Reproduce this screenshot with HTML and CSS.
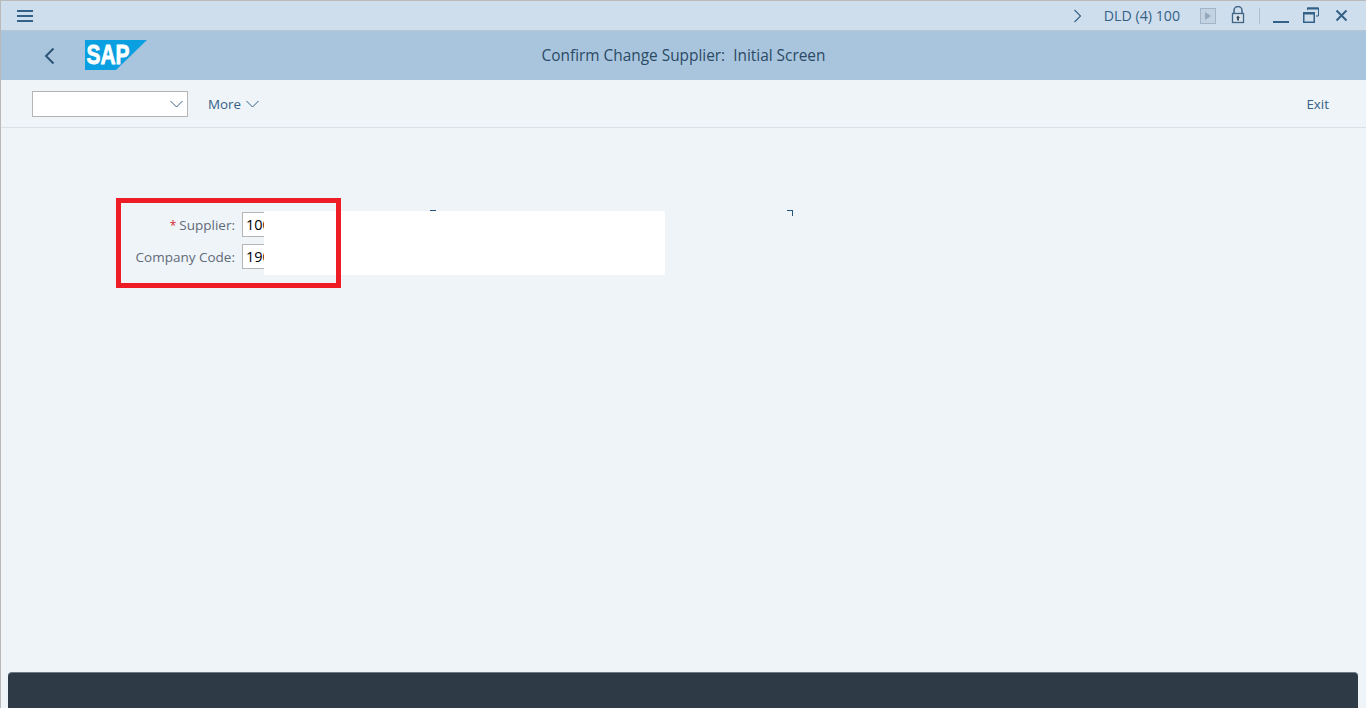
FILE: index.html
```html
<!DOCTYPE html>
<html lang="en">
<head>
<meta charset="utf-8">
<title>Confirm Change Supplier: Initial Screen</title>
<link rel="stylesheet" href="styles.css">
</head>
<body>
<div class="window">
  <header class="sysbar">
    <svg class="icon-menu" width="18" height="14" viewBox="0 0 18 14"><path d="M1 2h16M1 7h16M1 12h16" stroke="#346187" stroke-width="2" fill="none"/></svg>
    <div class="sys-right">
      <svg class="icon-next" width="10" height="14" viewBox="0 0 10 14"><path d="M1.500 1l6 6-6 6" stroke="#346187" stroke-width="1.100" fill="none"/></svg>
      <span class="sys-name">DLD (4) 100</span>
      <svg class="icon-play" width="16" height="16" viewBox="0 0 16 16"><rect x=".5" y=".5" width="15" height="15" fill="#c3d3e2" stroke="#a3b5c6"/><path d="M5 4l6 4-6 4z" fill="#92a9bf"/></svg>
      <svg class="icon-lock" width="14" height="18" viewBox="0 0 14 18"><path d="M3 8V4.500a4 4 0 0 1 8 0V8" stroke="#3f6485" stroke-width="1.500" fill="none"/><rect x="1.500" y="7.500" width="11" height="9" fill="#d8e2ec" stroke="#3f6485" stroke-width="1.300"/><path d="M7 9.500l2 2.500H8v2.500H6V12H5z" fill="#3f4f5f"/></svg>
      <span class="sys-sep"></span>
      <svg class="icon-min" width="16" height="14" viewBox="0 0 16 14"><path d="M0 13h16" stroke="#346187" stroke-width="2" fill="none"/></svg>
      <svg class="icon-restore" width="16" height="16" viewBox="0 0 16 16"><path d="M4.500 3V1h11v8H13" stroke="#346187" fill="none"/><path d="M4 .5h11.500v2H4z" fill="#346187"/><rect x=".75" y="5.750" width="10.500" height="9.500" fill="none" stroke="#346187" stroke-width="1.500"/><path d="M.5 5h11v2.500H.5z" fill="#346187"/></svg>
      <svg class="icon-close" width="13" height="13" viewBox="0 0 13 13"><path d="M1.500 1.500l10 10M11.500 1.500l-10 10" stroke="#346187" stroke-width="2" fill="none"/></svg>
    </div>
  </header>

  <div class="titlebar">
    <svg class="icon-back" width="11" height="18" viewBox="0 0 11 18"><path d="M9.500 1.500L2 9l7.500 7.500" stroke="#2d5577" stroke-width="2" fill="none"/></svg>
    <svg class="logo" width="62" height="31" viewBox="0 0 62 31"><path d="M0 0h62L31 30H0z" fill="#0a9fe0"/><text class="logo-text" x="1.500" y="24" textLength="43" lengthAdjust="spacingAndGlyphs">SAP</text></svg>
    <h1 class="title">Confirm Change Supplier:&nbsp; Initial Screen</h1>
  </div>

  <nav class="toolbar">
    <div class="combo">
      <svg width="13" height="8" viewBox="0 0 13 8"><path d="M.5 1l6 6 6-6" stroke="#346187" fill="none"/></svg>
    </div>
    <span class="more">More
      <svg width="13" height="8" viewBox="0 0 13 8"><path d="M.5 1l6 6 6-6" stroke="#346187" fill="none"/></svg>
    </span>
    <span class="exit">Exit</span>
  </nav>

  <main class="content">
    <div class="form">
      <div class="row">
        <label class="label"><span class="req">*</span>Supplier:</label>
        <div class="field">100</div>
      </div>
      <div class="row">
        <label class="label">Company Code:</label>
        <div class="field">190</div>
      </div>
    </div>
    <div class="mask"></div>
    <div class="mark-dash"></div>
    <div class="mark-corner"></div>
    <div class="highlight"></div>
  </main>

  <footer class="statusbar"></footer>
</div>
</body>
</html>
```

FILE: styles.css
```css
* { box-sizing: border-box; }
html, body { margin: 0; height: 100%; overflow: hidden; }
body { font-family: "Open Sans", "Noto Sans", "Liberation Sans", sans-serif; background: #eff4f8; color: #346187; }
.window { height: 708px; display: flex; flex-direction: column; border-left: 1px solid #b9b9b9; border-top: 1px solid #b9b9b9; }

.sysbar { height: 30px; flex: none; background: #cfdeec; display: flex; align-items: center; padding-left: 15px; border-bottom: 1px solid #b9c6d2; }
.sys-right { margin-left: auto; display: flex; align-items: center; }
.icon-next { margin-right: 21px; }
.sys-name { font-size: 14.200px; margin-right: 20px; }
.icon-play { margin-right: 15px; }
.icon-lock { margin-right: 14px; margin-top: -2px; }
.sys-sep { width: 1px; height: 16px; background: #aebfce; margin-right: 13px; }
.icon-min { margin-right: 14px; }
.icon-restore { margin-right: 16px; margin-top: -2px; }
.icon-close { margin-right: 18px; }

.titlebar { height: 49px; flex: none; background: #a9c5dd; display: flex; align-items: center; padding-left: 43px; position: relative; }
.icon-back { margin-right: 30px; }
.logo { display: block; }
.logo-text { font-family: "Liberation Sans", sans-serif; font-weight: 700; font-size: 27px; fill: #fff; stroke: #fff; stroke-width: .8px; }
.title { position: absolute; left: 0; right: 0; top: 15px; margin: 0; text-align: center; font-size: 15.400px; line-height: 20px; font-weight: 400; color: #2b4a66; }

.toolbar { height: 48px; flex: none; background: #eff4f8; display: flex; align-items: center; padding: 1px 37px 0 31px; border-bottom: 1px solid #d8e0e8; font-size: 13.400px; }
.combo { width: 156px; height: 26px; background: #fff; border: 1px solid #b5b5b5; display: flex; align-items: center; justify-content: flex-end; padding-right: 4px; margin-right: 20px; }
.more { display: flex; align-items: center; gap: 5px; }
.exit { margin-left: auto; }

.content { flex: 1; position: relative; padding: 84px 0 0 0; }
.form { display: flex; flex-direction: column; gap: 7px; width: 301px; }
.row { display: flex; align-items: center; height: 25px; gap: 7px; }
.label { width: 234px; text-align: right; font-size: 13.500px; color: #5f6b78; }
.req { color: #d9262c; font-size: 12px; margin-right: 3px; }
.field { width: 60px; height: 25px; background: #fff; border: 1px solid #b5b5b5; padding-left: 3px; font-size: 14.500px; line-height: 23px; color: #000; }

.mask { position: absolute; left: 263px; top: 83px; width: 401px; height: 64px; background: #fff; }
.mark-dash { position: absolute; left: 429px; top: 82px; width: 6px; height: 1px; background: #24557f; }
.mark-corner { position: absolute; left: 786px; top: 82px; width: 6px; height: 6px; border-top: 1px solid #24557f; border-right: 1px solid #24557f; }
.highlight { position: absolute; left: 115px; top: 70px; width: 225px; height: 90px; border: 5px solid #ee1c25; }

.statusbar { height: 36px; flex: none; margin: 0 8px 0 7px; background: #2e3b47; border-radius: 4px 4px 0 0; border-top: 1px solid #6d7a86; }
```
